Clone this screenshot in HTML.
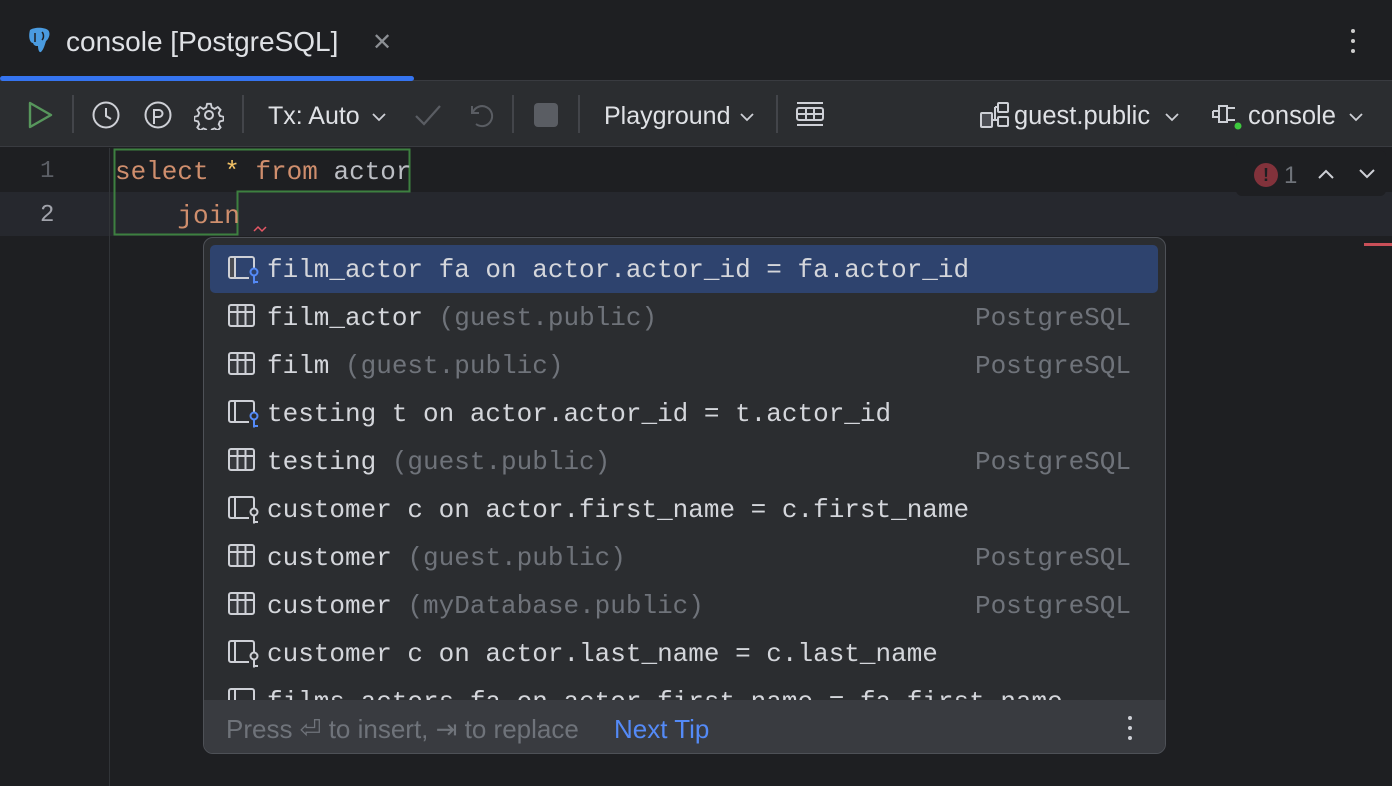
<!DOCTYPE html>
<html><head><meta charset="utf-8"><style>
*{margin:0;padding:0;box-sizing:border-box}
body{width:1392px;height:786px;background:#1e1f22;position:relative;overflow:hidden;font-family:"Liberation Sans",sans-serif;color:#dfe1e5}
.a{position:absolute}
.mono{font-family:"Liberation Mono","DejaVu Sans Mono",monospace;font-size:26px}
.tb{color:#dfe1e5;font-size:25px}
.row{position:absolute;left:210px;width:948px;height:48px;line-height:48px;white-space:pre;color:#d4d6db}
.row .t{position:absolute;left:57px;top:1px}
.row .g{color:#6f737a}
.row .r{position:absolute;right:27px;top:1px;color:#6f737a}
.row svg{position:absolute;left:18px;top:10px}
</style></head><body>
<!-- tab bar -->
<svg class="a" style="left:26px;top:27px" width="26" height="28" viewBox="0 0 26 28"><path d="M4 3c4-3 14-3 18 0c3 3 1 9-2 11c-1 3-2 8-5 11c-2 1-3-3-3-6c-2 0-4 0-5-3c-3 0-5-6-3-13z" fill="#4a9be0"/><path d="M9 6v9M16 5c2 2 2 6 0 8" stroke="#1e1f22" stroke-width="1.5" fill="none"/></svg>
<div class="a" style="left:66px;top:26px;font-size:28px;color:#dfe1e5">console [PostgreSQL]</div>
<div class="a" style="left:372px;top:28px;font-size:24px;color:#8c8f94">✕</div>
<div class="a" style="left:1351px;top:29px;width:4px;height:4px;border-radius:2px;background:#ccc;box-shadow:0 10px 0 #ccc,0 20px 0 #ccc"></div>
<div class="a" style="left:0;top:80px;width:1392px;height:1px;background:#393b40"></div>
<div class="a" style="left:0;top:76px;width:414px;height:5px;border-radius:3px;background:#3574f0"></div>
<!-- toolbar -->
<div class="a" style="left:0;top:81px;width:1392px;height:66px;background:#2b2d30;border-bottom:1px solid #393b40"></div>
<svg class="a" style="left:26px;top:100px" width="30" height="30"><path d="M4 3L25 15L4 27Z" fill="none" stroke="#57965c" stroke-width="2.4" stroke-linejoin="round"/></svg>
<div class="a" style="left:72px;top:95px;width:2px;height:38px;background:#43454a"></div>
<svg class="a" style="left:91px;top:100px" width="30" height="30"><circle cx="15" cy="15" r="12.5" fill="none" stroke="#ced0d6" stroke-width="2"/><path d="M15 8v8l5 3" fill="none" stroke="#ced0d6" stroke-width="2"/></svg>
<svg class="a" style="left:143px;top:100px" width="30" height="30"><circle cx="15" cy="15" r="12.5" fill="none" stroke="#ced0d6" stroke-width="2"/><path d="M11 24V10h5a3.5 3.5 0 010 7h-5" fill="none" stroke="#ced0d6" stroke-width="2"/></svg>
<svg class="a" style="left:194px;top:100px" width="30" height="30" viewBox="0 0 30 30"><path d="M13 3h4l1 4 3 1.5 3.5-2 3 3-2 3.5 1.2 3 4 1v4l-4 1-1.2 3 2 3.5-3 3-3.5-2-3 1.2-1 4h-4l-1-4-3-1.2-3.5 2-3-3 2-3.5-1.2-3-4-1v-4l4-1 1.2-3-2-3.5 3-3 3.5 2 3-1.5z" transform="translate(1 1) scale(.93)" fill="none" stroke="#ced0d6" stroke-width="2"/><circle cx="15" cy="15" r="4" fill="none" stroke="#ced0d6" stroke-width="2"/></svg>
<div class="a" style="left:242px;top:95px;width:2px;height:38px;background:#43454a"></div>
<div class="a tb" style="left:268px;top:102px">Tx: Auto</div>
<svg class="a" style="left:371px;top:111px" width="16" height="12"><path d="M2 3l6 6 6-6" fill="none" stroke="#ced0d6" stroke-width="1.8"/></svg>
<svg class="a" style="left:413px;top:101px" width="30" height="28"><path d="M3 15l8 8L27 5" fill="none" stroke="#5a5d63" stroke-width="2.2"/></svg>
<svg class="a" style="left:466px;top:100px" width="30" height="30"><path d="M6 6v7h7" fill="none" stroke="#5a5d63" stroke-width="2"/><path d="M7 12a10 10 0 1 1 3 12" fill="none" stroke="#5a5d63" stroke-width="2"/></svg>
<div class="a" style="left:512px;top:95px;width:2px;height:38px;background:#43454a"></div>
<div class="a" style="left:534px;top:103px;width:24px;height:24px;border-radius:4px;background:#5a5d63"></div>
<div class="a" style="left:578px;top:95px;width:2px;height:38px;background:#43454a"></div>
<div class="a tb" style="left:604px;top:102px">Playground</div>
<svg class="a" style="left:739px;top:111px" width="16" height="12"><path d="M2 3l6 6 6-6" fill="none" stroke="#ced0d6" stroke-width="1.8"/></svg>
<div class="a" style="left:776px;top:95px;width:2px;height:38px;background:#43454a"></div>
<svg class="a" style="left:795px;top:101px" width="30" height="26"><path d="M2 2h26M2 24h26" stroke="#ced0d6" stroke-width="2"/><rect x="2" y="7" width="26" height="12" rx="2" fill="none" stroke="#ced0d6" stroke-width="2"/><path d="M2 13h26M11 7v12M19 7v12" stroke="#ced0d6" stroke-width="2"/></svg>
<svg class="a" style="left:980px;top:101px" width="30" height="28"><rect x="1" y="12" width="11" height="14" rx="1" fill="#4a4c52" stroke="#ced0d6" stroke-width="2"/><rect x="18" y="2" width="10" height="9" rx="1" fill="none" stroke="#ced0d6" stroke-width="2"/><rect x="18" y="16" width="10" height="9" rx="1" fill="none" stroke="#ced0d6" stroke-width="2"/><path d="M12 19h6M15 6v13M15 6h3" fill="none" stroke="#ced0d6" stroke-width="2"/></svg>
<div class="a tb" style="left:1014px;top:102px;font-size:25.5px">guest.public</div>
<svg class="a" style="left:1164px;top:111px" width="16" height="12"><path d="M2 3l6 6 6-6" fill="none" stroke="#ced0d6" stroke-width="1.8"/></svg>
<svg class="a" style="left:1211px;top:101px" width="34" height="30"><path d="M2 10h6M2 10v6h6M8 5h8v16H8zM16 7h8M16 19h8" fill="none" stroke="#ced0d6" stroke-width="2"/><circle cx="27" cy="25" r="3.5" fill="#3ec93e"/></svg>
<div class="a tb" style="left:1248px;top:102px;font-size:25.5px">console</div>
<svg class="a" style="left:1348px;top:111px" width="16" height="12"><path d="M2 3l6 6 6-6" fill="none" stroke="#ced0d6" stroke-width="1.8"/></svg>
<!-- editor -->
<div class="a" style="left:0;top:192px;width:1392px;height:44px;background:#26282e"></div>
<div class="a" style="left:109px;top:148px;width:1px;height:638px;background:#313438"></div>
<div class="a mono" style="left:40px;top:158px;font-size:24px;color:#5c5f66">1</div>
<div class="a mono" style="left:40px;top:202px;font-size:24px;color:#a1a3ab">2</div>
<svg class="a" style="left:113px;top:148px" width="300" height="90"><path d="M1.5 1.5H296.5V43.5H124.5V86.5H1.5Z" fill="none" stroke="#3d8040" stroke-width="2"/></svg>
<div class="a mono" style="left:115px;top:157px;white-space:pre"><span style="color:#cf8e6d">select</span> <span style="color:#f3c266">*</span> <span style="color:#cf8e6d">from</span> <span style="color:#bcbec4">actor</span></div>
<div class="a mono" style="left:115px;top:201px;white-space:pre;color:#cf8e6d">    join</div>
<svg class="a" style="left:253px;top:224px" width="16" height="10"><path d="M1 7l4-4 4 4 4-4" fill="none" stroke="#e55765" stroke-width="1.5"/></svg>
<div class="a" style="left:1236px;top:150px;width:150px;height:46px;background:#1e1f22;border-radius:6px"></div>
<div class="a" style="left:1254px;top:163px;width:24px;height:24px;border-radius:12px;background:#82323b;color:#1e1f22;font-weight:bold;font-size:18px;text-align:center;line-height:24px">!</div>
<div class="a" style="left:1284px;top:162px;font-size:24px;color:#6f737a">1</div>
<svg class="a" style="left:1316px;top:167px" width="20" height="14"><path d="M3 11l7-7 7 7" fill="none" stroke="#ced0d6" stroke-width="2"/></svg>
<svg class="a" style="left:1357px;top:167px" width="20" height="14"><path d="M3 3l7 7 7-7" fill="none" stroke="#ced0d6" stroke-width="2"/></svg>
<div class="a" style="left:1364px;top:243px;width:28px;height:3px;background:#c94f58"></div>
<!-- popup -->
<div class="a" style="left:203px;top:237px;width:963px;height:517px;background:#2b2d30;border:1px solid #4e5157;border-radius:10px;overflow:hidden">
<div class="a" style="left:0;top:462px;width:963px;height:55px;background:#393b40"></div>
</div>
<div class="a" style="left:210px;top:245px;width:948px;height:48px;background:#2e436e;border-radius:5px"></div>
<div class="a mono" style="left:0;top:0;width:1392px;height:700px;overflow:hidden">
<div class="row" style="top:245px"><svg width="32" height="30"><rect x="1" y="2" width="25" height="21" rx="2" fill="none" stroke="#ced0d6" stroke-width="2"/><rect x="2" y="3" width="6" height="19" fill="#4a4c52"/><path d="M7 2v21" stroke="#ced0d6" stroke-width="2"/><rect x="21" y="13" width="10" height="16" fill="#2e436e"/><circle cx="26" cy="17" r="3.5" fill="none" stroke="#548af7" stroke-width="2"/><path d="M26 20.5v8M26 27h4" stroke="#548af7" stroke-width="2"/></svg><span class="t">film_actor fa on actor.actor_id = fa.actor_id</span></div>
<div class="row" style="top:293px"><svg width="32" height="30"><rect x="1" y="2" width="25" height="21" rx="2" fill="#4a4c52" fill-opacity=".4" stroke="#ced0d6" stroke-width="2"/><path d="M1 9h25M9.5 2v21M17.5 2v21" stroke="#ced0d6" stroke-width="2"/></svg><span class="t">film_actor <span class="g">(guest.public)</span></span><span class="r">PostgreSQL</span></div>
<div class="row" style="top:341px"><svg width="32" height="30"><rect x="1" y="2" width="25" height="21" rx="2" fill="#4a4c52" fill-opacity=".4" stroke="#ced0d6" stroke-width="2"/><path d="M1 9h25M9.5 2v21M17.5 2v21" stroke="#ced0d6" stroke-width="2"/></svg><span class="t">film <span class="g">(guest.public)</span></span><span class="r">PostgreSQL</span></div>
<div class="row" style="top:389px"><svg width="32" height="30"><rect x="1" y="2" width="25" height="21" rx="2" fill="none" stroke="#ced0d6" stroke-width="2"/><path d="M7 2v21" stroke="#ced0d6" stroke-width="2"/><rect x="21" y="13" width="10" height="16" fill="#2b2d30"/><circle cx="26" cy="17" r="3.5" fill="none" stroke="#548af7" stroke-width="2"/><path d="M26 20.5v8M26 27h4" stroke="#548af7" stroke-width="2"/></svg><span class="t">testing t on actor.actor_id = t.actor_id</span></div>
<div class="row" style="top:437px"><svg width="32" height="30"><rect x="1" y="2" width="25" height="21" rx="2" fill="#4a4c52" fill-opacity=".4" stroke="#ced0d6" stroke-width="2"/><path d="M1 9h25M9.5 2v21M17.5 2v21" stroke="#ced0d6" stroke-width="2"/></svg><span class="t">testing <span class="g">(guest.public)</span></span><span class="r">PostgreSQL</span></div>
<div class="row" style="top:485px"><svg width="32" height="30"><rect x="1" y="2" width="25" height="21" rx="2" fill="none" stroke="#ced0d6" stroke-width="2"/><path d="M7 2v21" stroke="#ced0d6" stroke-width="2"/><rect x="21" y="13" width="10" height="16" fill="#2b2d30"/><circle cx="26" cy="17" r="3.5" fill="none" stroke="#ced0d6" stroke-width="2"/><path d="M26 20.5v8M26 27h4" stroke="#ced0d6" stroke-width="2"/></svg><span class="t">customer c on actor.first_name = c.first_name</span></div>
<div class="row" style="top:533px"><svg width="32" height="30"><rect x="1" y="2" width="25" height="21" rx="2" fill="#4a4c52" fill-opacity=".4" stroke="#ced0d6" stroke-width="2"/><path d="M1 9h25M9.5 2v21M17.5 2v21" stroke="#ced0d6" stroke-width="2"/></svg><span class="t">customer <span class="g">(guest.public)</span></span><span class="r">PostgreSQL</span></div>
<div class="row" style="top:581px"><svg width="32" height="30"><rect x="1" y="2" width="25" height="21" rx="2" fill="#4a4c52" fill-opacity=".4" stroke="#ced0d6" stroke-width="2"/><path d="M1 9h25M9.5 2v21M17.5 2v21" stroke="#ced0d6" stroke-width="2"/></svg><span class="t">customer <span class="g">(myDatabase.public)</span></span><span class="r">PostgreSQL</span></div>
<div class="row" style="top:629px"><svg width="32" height="30"><rect x="1" y="2" width="25" height="21" rx="2" fill="none" stroke="#ced0d6" stroke-width="2"/><path d="M7 2v21" stroke="#ced0d6" stroke-width="2"/><rect x="21" y="13" width="10" height="16" fill="#2b2d30"/><circle cx="26" cy="17" r="3.5" fill="none" stroke="#ced0d6" stroke-width="2"/><path d="M26 20.5v8M26 27h4" stroke="#ced0d6" stroke-width="2"/></svg><span class="t">customer c on actor.last_name = c.last_name</span></div>
<div class="row" style="top:677px"><svg width="32" height="30"><rect x="1" y="2" width="25" height="21" rx="2" fill="none" stroke="#ced0d6" stroke-width="2"/><path d="M7 2v21" stroke="#ced0d6" stroke-width="2"/></svg><span class="t">films_actors fa on actor.first_name = fa.first_name</span></div>
</div>
<div class="a" style="left:226px;top:714px;font-size:26px;color:#6f737a;white-space:nowrap">Press ⏎ to insert, ⇥ to replace</div>
<div class="a" style="left:614px;top:714px;font-size:26px;color:#548af7">Next Tip</div>
<div class="a" style="left:1128px;top:716px;width:4px;height:4px;border-radius:2px;background:#ced0d6;box-shadow:0 10px 0 #ced0d6,0 20px 0 #ced0d6"></div>
</body></html>
